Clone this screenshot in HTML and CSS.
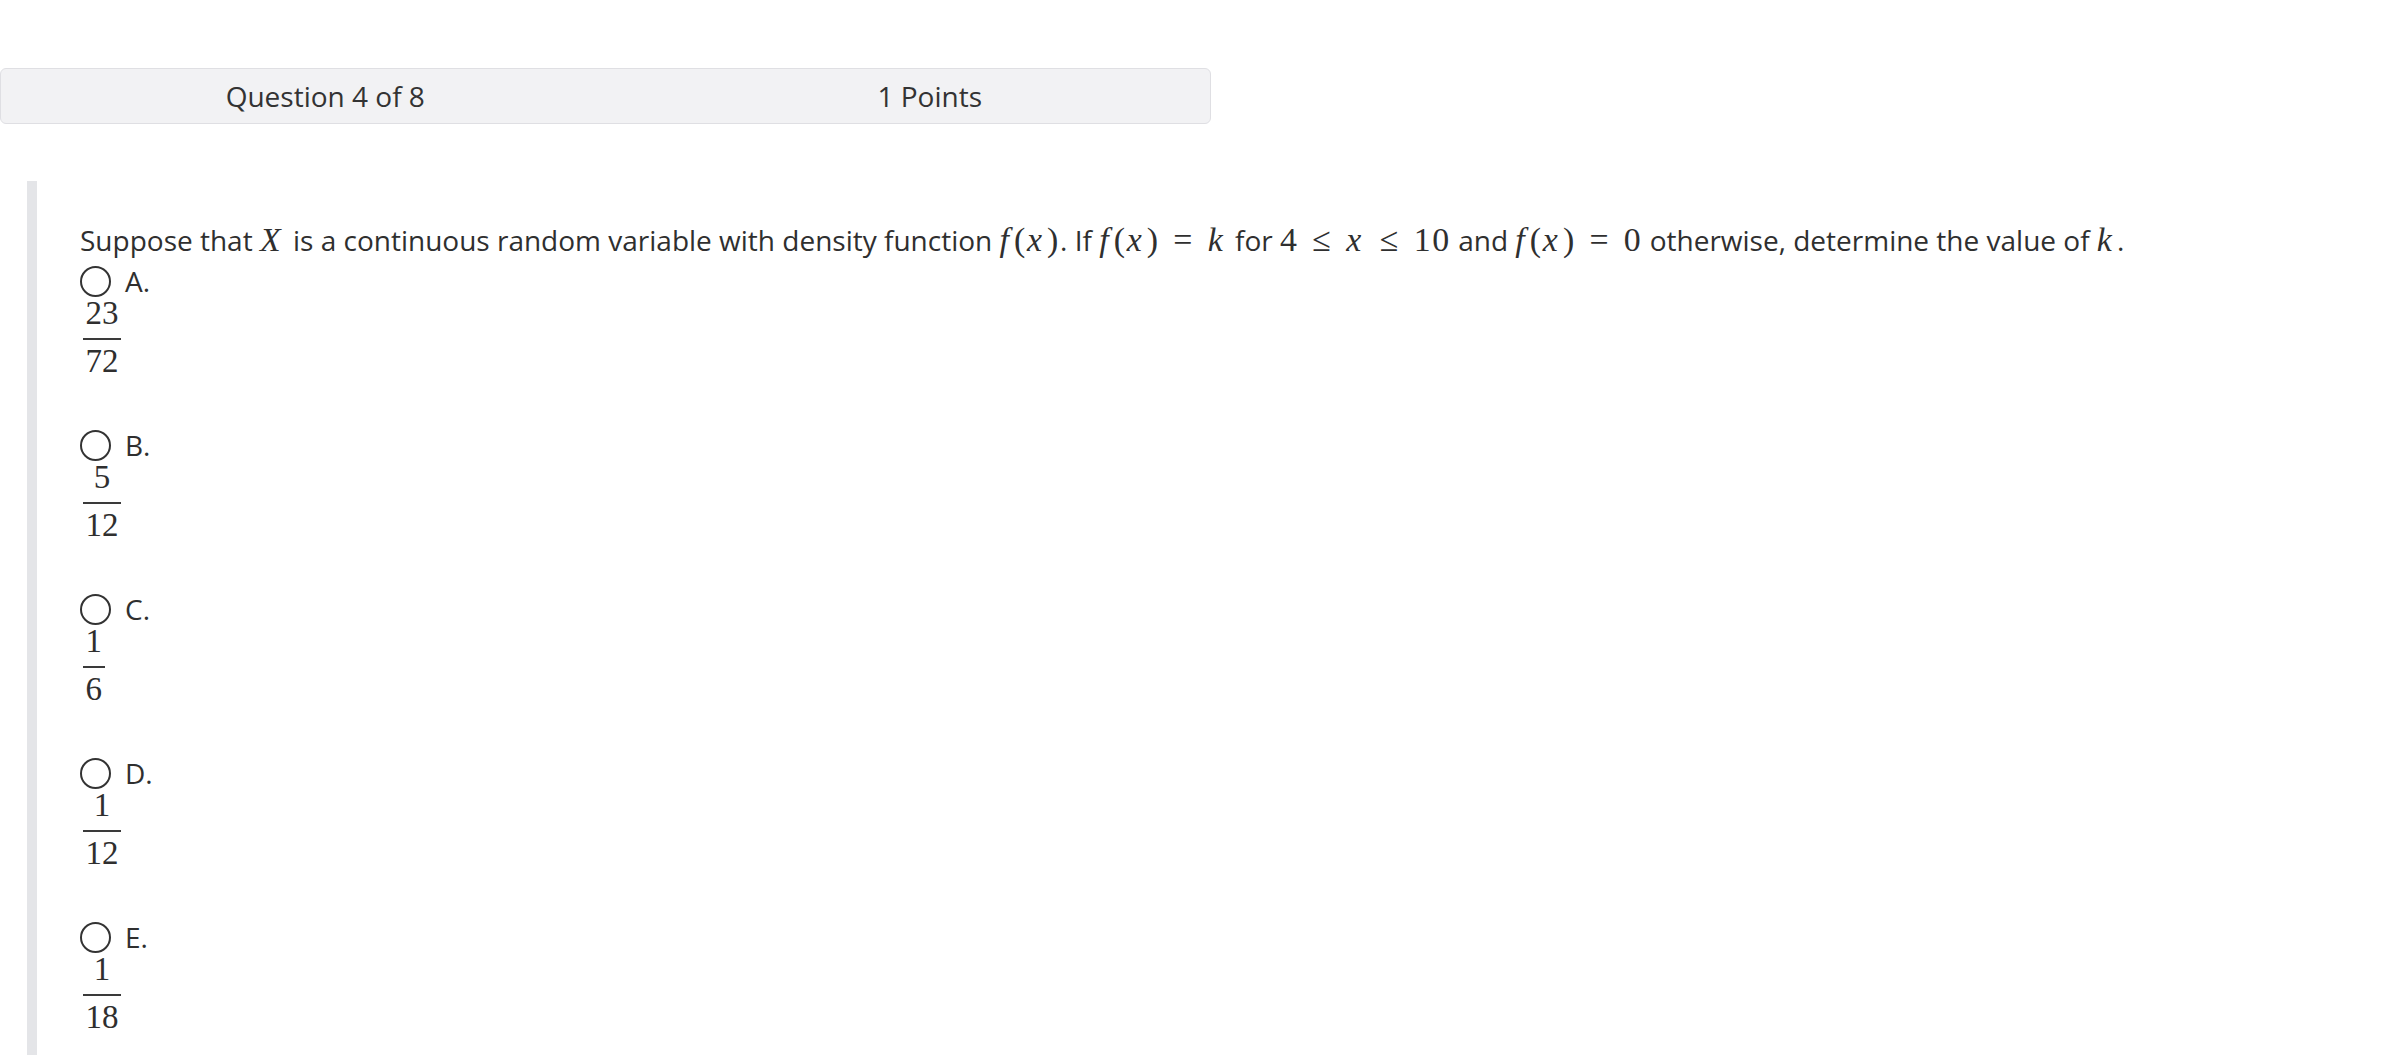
FILE: index.html
```html
<!DOCTYPE html>
<html lang="en">
<head>
    <meta charset="UTF-8">
    <meta name="viewport" content="width=device-width, initial-scale=1.0">
    <title>Question 4 of 8</title>
    <link rel="stylesheet" href="styles.css">
</head>
<body>
    <div class="quiz-header">
        <div class="quiz-header-cell">Question 4 of 8</div>
        <div class="quiz-header-cell">1 Points</div>
    </div>
    <div class="question">
        <p class="prompt">Suppose that <span class="math"><i>X</i></span> is a continuous random variable with density function <span class="math"><i>f</i>(<i>x</i>)</span>. If <span class="math"><i>f</i>(<i>x</i>)<span class="rel">=</span><i>k</i></span> for <span class="math">4<span class="rel">≤</span><i>x</i><span class="rel">≤</span>10</span> and <span class="math"><i>f</i>(<i>x</i>)<span class="rel">=</span>0</span> otherwise, determine the value of <span class="math"><i>k</i></span>.</p>

        <div class="choice">
            <label class="choice-head"><input type="radio" name="q4" value="A"><span>A.</span></label>
            <span class="frac"><span class="num">23</span><span class="bar"></span><span class="den">72</span></span>
        </div>
        <div class="choice">
            <label class="choice-head"><input type="radio" name="q4" value="B"><span>B.</span></label>
            <span class="frac"><span class="num">5</span><span class="bar"></span><span class="den">12</span></span>
        </div>
        <div class="choice">
            <label class="choice-head"><input type="radio" name="q4" value="C"><span>C.</span></label>
            <span class="frac"><span class="num">1</span><span class="bar"></span><span class="den">6</span></span>
        </div>
        <div class="choice">
            <label class="choice-head"><input type="radio" name="q4" value="D"><span>D.</span></label>
            <span class="frac"><span class="num">1</span><span class="bar"></span><span class="den">12</span></span>
        </div>
        <div class="choice">
            <label class="choice-head"><input type="radio" name="q4" value="E"><span>E.</span></label>
            <span class="frac"><span class="num">1</span><span class="bar"></span><span class="den">18</span></span>
        </div>
    </div>
</body>
</html>
```

FILE: styles.css
```css
body {
    font-family: "Open Sans", Arial, sans-serif;
    font-size: 28px;
    color: #2f2f2f;
    margin: 0;
    padding: 0;
    background-color: #fff;
    overflow: hidden;
}
.quiz-header {
    display: grid;
    grid-template-columns: 1fr 1fr;
    width: 1211px;
    box-sizing: border-box;
    margin-top: 68px;
    background: #f2f2f4;
    border: 1px solid #dfdfe3;
    border-radius: 6px;
}
.quiz-header-cell {
    padding: 7px 0 7px 44px;
    line-height: 40px;
    text-align: center;
    color: #333;
}
.question {
    margin: 57px 0 0 27px;
    padding: 39px 0 0 43px;
    border-left: 10px solid #e4e5e8;
    min-height: 900px;
}
.prompt {
    margin: 0;
    line-height: 40px;
    white-space: nowrap;
}
.math {
    font-family: "Liberation Serif", "Times New Roman", serif;
    font-size: 1.21em;
    line-height: 1;
    letter-spacing: 0.05em;
}
.math i {
    font-style: italic;
    padding-right: 0.1em;
}
.math .rel {
    margin: 0 0.4em;
}
.choice {
    display: flex;
    flex-direction: column;
    align-items: flex-start;
    margin-bottom: 51px;
}
.choice:first-of-type {
    margin-top: 5px;
}
.choice-head {
    display: flex;
    align-items: center;
    gap: 14px;
    height: 32px;
}
.choice-head input {
    appearance: none;
    -webkit-appearance: none;
    width: 31px;
    height: 31px;
    margin: 0;
    border: 2px solid #333;
    border-radius: 50%;
    background: #fff;
}
.choice-head span {
    line-height: 32px;
}
.frac {
    display: flex;
    flex-direction: column;
    margin-left: 3px;
    font-family: "Liberation Serif", "Times New Roman", serif;
    font-size: 33px;
    text-align: center;
}
.frac .num,
.frac .den {
    display: block;
    line-height: 1;
    padding: 0 2.5px;
}
.frac .bar {
    display: block;
    height: 2px;
    background: #3a3a3a;
    margin: 8px 0 5px;
}
```
